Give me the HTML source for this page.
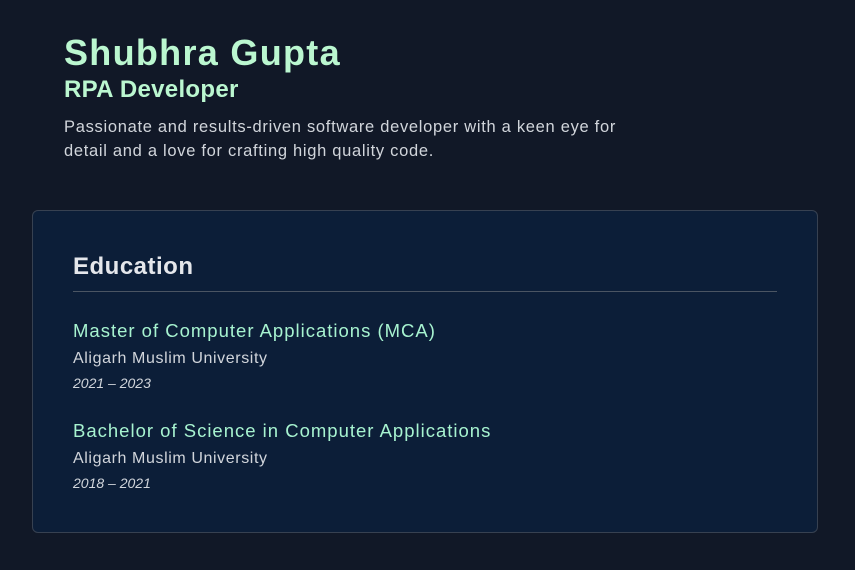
<!DOCTYPE html>
<html><head><style>
body{margin:0;background:#111827;width:855px;height:570px;overflow:hidden;font-family:"Liberation Sans",sans-serif;}
.name{position:absolute;left:64px;top:32px;font-size:36px;font-weight:bold;color:#bbf7d0;letter-spacing:1.3px}
.role{position:absolute;left:64px;top:76px;font-size:24px;font-weight:bold;color:#bbf7d0;letter-spacing:0.3px}
.desc{position:absolute;left:64px;top:115px;width:600px;font-size:16.5px;line-height:24px;color:#d1d5db;letter-spacing:0.7px}
.card{position:absolute;left:32px;top:210px;width:786px;height:323px;box-sizing:border-box;border:1px solid #374151;border-radius:6px;background:#0c1e38}
h2{position:absolute;left:40px;top:42px;margin:0;font-size:24px;color:#e5e7eb;letter-spacing:0.5px}
.hr{position:absolute;left:40px;right:40px;top:80px;border-top:1px solid #4b5563}
.deg{position:absolute;left:40px;font-size:18.5px;color:#a7f3d0;letter-spacing:1px}
.uni{position:absolute;left:40px;font-size:16px;color:#d1d5db;letter-spacing:0.6px}
.yr{position:absolute;left:40px;font-size:14px;font-style:italic;color:#d1d5db}
</style></head><body>
<div class="name">Shubhra Gupta</div>
<div class="role">RPA Developer</div>
<div class="desc">Passionate and results-driven software developer with a keen eye for<br>detail and a love for crafting high quality code.</div>
<div class="card">
<h2>Education</h2><div class="hr"></div>
<div class="deg" style="top:109px">Master of Computer Applications (MCA)</div>
<div class="uni" style="top:139px">Aligarh Muslim University</div>
<div class="yr" style="top:164px">2021 – 2023</div>
<div class="deg" style="top:209px">Bachelor of Science in Computer Applications</div>
<div class="uni" style="top:239px">Aligarh Muslim University</div>
<div class="yr" style="top:264px">2018 – 2021</div>
</div>
</body></html>
